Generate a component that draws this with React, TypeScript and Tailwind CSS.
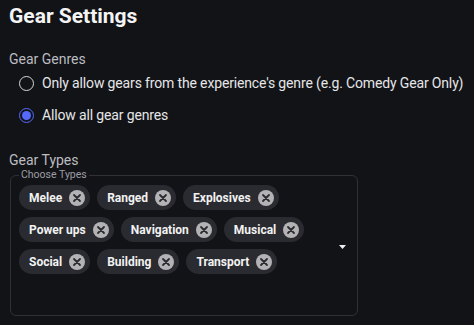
import React from "react";

const types = [
  ["Melee", "Ranged", "Explosives"],
  ["Power ups", "Navigation", "Musical"],
  ["Social", "Building", "Transport"],
];

function Chip({ label }: { label: string }) {
  return (
    <div className="flex items-center h-[25px] rounded-full bg-[#2a2b30] pl-[10px] pr-[5px] gap-[7px]">
      <span className="text-[12px] font-bold text-[#f2f2f2] leading-none">{label}</span>
      <svg width="16" height="16" viewBox="0 0 16 16">
        <circle cx="8" cy="8" r="8" fill="#b3b3b6" />
        <path d="M5 5 L11 11 M11 5 L5 11" stroke="#2a2b30" strokeWidth="1.8" strokeLinecap="round" />
      </svg>
    </div>
  );
}

function Radio({ checked, label }: { checked?: boolean; label: string }) {
  return (
    <label className="flex items-center gap-[8px] h-[20px]">
      {checked ? (
        <span className="w-[15px] h-[15px] rounded-full border-[1.5px] border-[#5569ff] flex items-center justify-center">
          <span className="w-[9px] h-[9px] rounded-full bg-[#5569ff]" />
        </span>
      ) : (
        <span className="w-[15px] h-[15px] rounded-full border-[1.5px] border-[#d8d8d8]" />
      )}
      <span className="text-[14px] text-[#e6e6e8] whitespace-nowrap tracking-[-0.15px]">{label}</span>
    </label>
  );
}

export default function App() {
  return (
    <div
      className="w-[474px] h-[325px] bg-[#121317] overflow-hidden pl-[9px] pt-[2px]"
      style={{ fontFamily: "Roboto, 'Noto Sans', sans-serif" }}
    >
      <h1 className="text-[21px] font-bold text-[#f4f4f5] leading-[28px]">Gear Settings</h1>
      <div className="mt-[19px] text-[14px] text-[#bcbcc0] leading-[20px]">Gear Genres</div>
      <div className="flex flex-col gap-[12px] mt-[4px] pl-[10px]">
        <Radio label="Only allow gears from the experience's genre (e.g. Comedy Gear Only)" />
        <Radio checked label="Allow all gear genres" />
      </div>
      <div className="mt-[25px] text-[14px] text-[#bcbcc0] leading-[20px]">Gear Types</div>
      <fieldset className="w-[348px] h-[148px] -mt-[2px] ml-[1px] border border-[#303137] rounded-[6px] pl-[8px] pr-[11px] pb-[8px] flex">
        <legend className="px-[2px] text-[10.5px] text-[#9d9da3] leading-[14px]">Choose Types</legend>
        <div className="flex flex-1 items-center">
          <div className="flex-1 self-start pt-[3px] flex flex-col gap-[7px]">
            {types.map((row, i) => (
              <div key={i} className="flex gap-[7px]">
                {row.map((t) => (
                  <Chip key={t} label={t} />
                ))}
              </div>
            ))}
          </div>
          <svg width="7" height="4" viewBox="0 0 7 4" className="mt-[4px]">
            <path d="M0 0 L7 0 L3.5 4 Z" fill="#f0f0f0" />
          </svg>
        </div>
      </fieldset>
    </div>
  );
}
